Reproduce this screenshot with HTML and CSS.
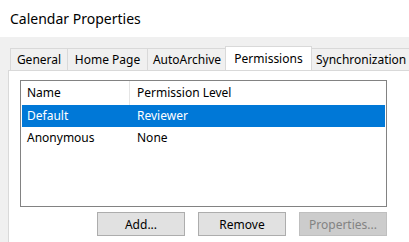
FILE: index.html
```html
<!DOCTYPE html>
<html>
<head>
<meta charset="utf-8">
<title>Calendar Properties</title>
<link rel="stylesheet" href="styles.css">
</head>
<body>
<div class="title">Calendar Properties</div>
<div class="dialog">
  <div class="tabs">
    <div class="tab t-general">General</div>
    <div class="tab t-home">Home Page</div>
    <div class="tab t-archive">AutoArchive</div>
    <div class="tab t-perm active">Permissions</div>
    <div class="tab t-sync">Synchronization</div>
  </div>
  <div class="panel">
    <div class="list">
      <div class="row head">
        <div class="c1">Name</div>
        <div class="c2">Permission Level</div>
      </div>
      <div class="row sel">
        <div class="c1">Default</div>
        <div class="c2">Reviewer</div>
      </div>
      <div class="row">
        <div class="c1">Anonymous</div>
        <div class="c2">None</div>
      </div>
    </div>
    <div class="buttons">
      <button class="btn">Add...</button>
      <button class="btn">Remove</button>
      <button class="btn disabled" disabled>Properties...</button>
    </div>
  </div>
</div>
</body>
</html>
```

FILE: styles.css
```css
html, body {
  margin: 0;
  padding: 0;
}
body {
  width: 409px;
  height: 242px;
  overflow: hidden;
  background: #f0f0f0;
  font-family: "Noto Sans", "Open Sans", sans-serif;
  font-size: 12px;
  color: #000;
}
.title {
  height: 37px;
  background: #fff;
  padding-left: 10px;
  font-size: 14px;
  line-height: 37px;
  white-space: nowrap;
}
.dialog {
  padding: 9px 0 0 8px;
  overflow: hidden;
}
.tabs {
  display: flex;
  align-items: flex-end;
  height: 24px;
  padding-left: 2px;
  position: relative;
  z-index: 2;
  white-space: nowrap;
  overflow: hidden;
}
.tab {
  box-sizing: border-box;
  height: 22px;
  line-height: 21px;
  border: 1px solid #d9d9d9;
  border-bottom: none;
  background: #f0f0f0;
  text-align: center;
  margin-left: -1px;
  flex: none;
}
.t-general { width: 58px; margin-left: 0; }
.t-home { width: 81px; }
.t-archive { width: 80px; }
.t-perm { width: 87px; }
.t-sync { width: 102px; margin-left: -2px; text-align: left; padding-left: 5px; }
.tab.active {
  height: 25px;
  line-height: 23px;
  margin-left: -2px;
  margin-bottom: -1px;
  background: #fff;
  position: relative;
  z-index: 3;
}
.panel {
  box-sizing: border-box;
  width: 401px;
  height: 173px;
  border: 1px solid #d9d9d9;
  border-right: none;
  background: #fff;
  padding: 9px 0 0 11px;
}
.list {
  box-sizing: border-box;
  width: 367px;
  height: 127px;
  border: 1px solid #828282;
  background: #fff;
}
.row {
  display: flex;
  height: 22px;
  line-height: 22px;
  margin: 0 1px;
  white-space: nowrap;
}
.row.head {
  height: 24px;
  line-height: 24px;
}
.c1 {
  box-sizing: border-box;
  width: 108px;
  padding-left: 5px;
  flex: none;
}
.head .c1 {
  border-right: 1px solid #e5e5e5;
}
.c2 {
  padding-left: 7px;
}
.row.sel {
  background: #0078d7;
  color: #fff;
}
.buttons {
  display: flex;
  justify-content: flex-end;
  gap: 13px;
  width: 367px;
  margin-top: 5px;
}
.btn {
  box-sizing: border-box;
  width: 88px;
  height: 24px;
  border: 1px solid #adadad;
  background: #e1e1e1;
  font-family: "Noto Sans", "Open Sans", sans-serif;
  font-size: 12px;
  color: #000;
  padding: 0;
  margin: 0;
  border-radius: 0;
}
.btn.disabled {
  background: #cccccc;
  border-color: #bfbfbf;
  color: #838383;
}
```
